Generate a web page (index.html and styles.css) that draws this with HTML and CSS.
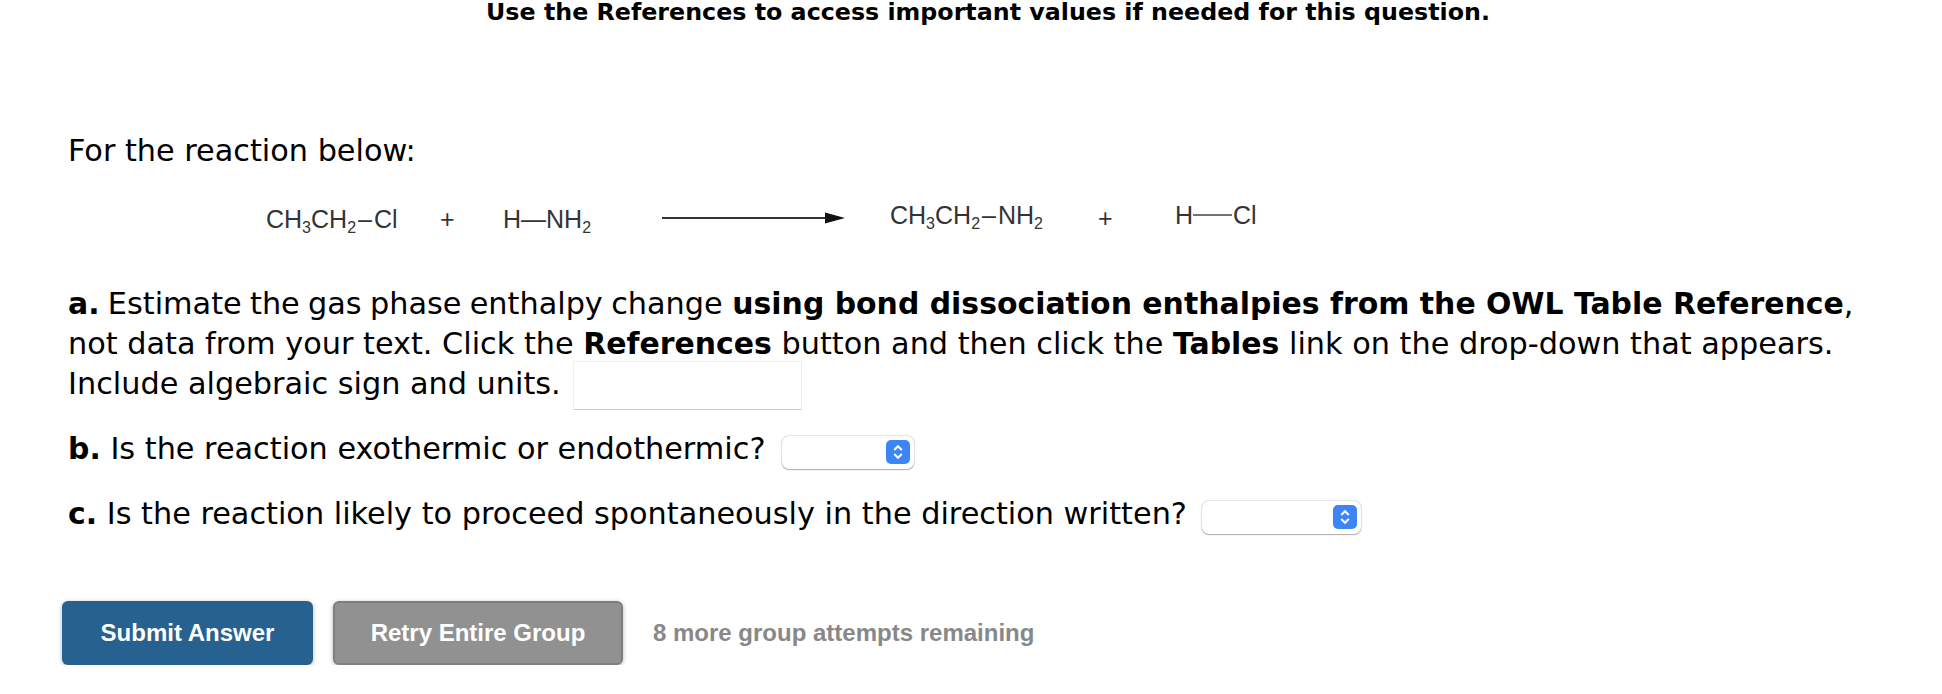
FILE: index.html
```html
<!DOCTYPE html>
<html lang="en">
<head>
    <meta charset="UTF-8">
    <title>Reaction question</title>
    <link rel="stylesheet" href="styles.css">
</head>
<body>
    <div class="notice">Use the References to access important values if needed for this question.</div>

    <div class="question">
        <p class="intro">For the reaction below:</p>

        <!-- reaction scheme -->
        <svg class="reaction" width="1200" height="60" viewBox="0 0 1200 60">
            <g class="chem">
                <text x="198" y="40">CH<tspan class="sub" dy="5">3</tspan><tspan dy="-5">CH</tspan><tspan class="sub" dy="5">2</tspan><tspan dx="2" dy="-5">&#8211;</tspan><tspan dx="2">Cl</tspan></text>
                <text x="372" y="40">+</text>
                <text x="435" y="40">H&#8212;NH<tspan class="sub" dy="5">2</tspan></text>
                <text x="822" y="36">CH<tspan class="sub" dy="5">3</tspan><tspan dy="-5">CH</tspan><tspan class="sub" dy="5">2</tspan><tspan dx="2" dy="-5">&#8211;</tspan><tspan dx="2">NH</tspan><tspan class="sub" dy="5">2</tspan></text>
                <text x="1030" y="39">+</text>
                <text x="1107" y="36">H</text>
                <text x="1165" y="36">Cl</text>
            </g>
            <line x1="1125" y1="27" x2="1164" y2="27" stroke="#444" stroke-width="1.3"/>
            <line x1="594" y1="30" x2="765" y2="30" stroke="#333" stroke-width="1.8"/>
            <path d="M757 24.5 L777 30 L757 35.5 Z" fill="#111"/>
        </svg>

        <p class="part-a"><span class="tight"><b>a.</b> Estimate the gas phase enthalpy change</span> <b>using bond dissociation enthalpies from the OWL Table Reference</b>,<br>
        not data from your text. Click the <b>References</b> button and then click the <b>Tables</b> link on the drop-down that appears.<br>
        Include algebraic sign and units. <span class="answer-box"></span></p>

        <p class="part-b"><b>b.</b> Is the reaction exothermic or endothermic? <span class="select-box short"><span class="select-arrow"><svg width="10" height="16" viewBox="0 0 10 16"><path d="M1.2 6 L5 2.2 L8.8 6 M1.2 10 L5 13.8 L8.8 10" fill="none" stroke="#fff" stroke-width="2"/></svg></span></span></p>

        <p class="part-c"><b>c.</b> Is the reaction likely to proceed spontaneously in the direction written? <span class="select-box long"><span class="select-arrow"><svg width="10" height="16" viewBox="0 0 10 16"><path d="M1.2 6 L5 2.2 L8.8 6 M1.2 10 L5 13.8 L8.8 10" fill="none" stroke="#fff" stroke-width="2"/></svg></span></span></p>
    </div>

    <div class="actions">
        <button class="btn btn-submit">Submit Answer</button>
        <button class="btn btn-retry">Retry Entire Group</button>
        <span class="attempts">8 more group attempts remaining</span>
    </div>
</body>
</html>
```

FILE: styles.css
```css
body {
    margin: 0;
    background-color: #fff;
    color: #000;
    font-family: "DejaVu Sans", sans-serif;
    font-size: 30.3px;
    line-height: 40px;
}
b {
    font-size: 29.9px;
}
.tight {
    word-spacing: -1.3px;
}
.notice {
    padding-left: 34px;
    height: 22px;
    line-height: 24px;
    text-align: center;
    font-size: 23.75px;
    font-weight: bold;
}
.question {
    padding-left: 68px;
}
.question p {
    margin: 0;
}
.intro {
    padding-top: 109px;
}
.reaction {
    display: block;
    margin: 17px 0 0 0;
}
.chem text {
    font-family: "Liberation Sans", Arial, sans-serif;
    font-size: 25px;
    fill: #333;
}
.chem .sub {
    font-size: 16px;
}
.part-a {
    padding-top: 36px;
}
.part-b {
    padding-top: 25px;
}
.part-c {
    padding-top: 25px;
}
.answer-box {
    display: inline-block;
    width: 229px;
    height: 49px;
    margin: -12px 0 -12px 3px;
    vertical-align: -4px;
    box-sizing: border-box;
    border: 1px solid #eee;
    border-bottom-color: #ccc;
}
.select-box {
    display: inline-flex;
    justify-content: flex-end;
    align-items: center;
    height: 33px;
    margin: -6px 0 -6px 7px;
    padding-right: 4px;
    vertical-align: -1px;
    box-sizing: border-box;
    border-radius: 7px;
    background-color: #fff;
    box-shadow: 0 0 2px rgba(0,0,0,0.35), 0 1px 1px rgba(0,0,0,0.25);
}
.short {
    width: 132px;
}
.long {
    width: 159px;
    margin-left: 5px;
}
.select-arrow {
    display: flex;
    justify-content: center;
    align-items: center;
    width: 24px;
    height: 24px;
    border-radius: 5px;
    background-color: #3b85f7;
}
.actions {
    display: flex;
    align-items: center;
    margin-top: 67px;
    padding-left: 62px;
}
.btn {
    height: 64px;
    border-radius: 6px;
    color: #fff;
    font-family: "Liberation Sans", Arial, sans-serif;
    font-size: 24px;
    font-weight: bold;
    box-shadow: 0 1px 4px rgba(0,0,0,0.3);
}
.btn-submit {
    width: 251px;
    margin-right: 20px;
    border: none;
    background-color: #27618f;
}
.btn-retry {
    width: 290px;
    margin-right: 30px;
    border: 2px solid #7f7f7f;
    background-color: #919191;
}
.attempts {
    color: #888;
    font-family: "Liberation Sans", Arial, sans-serif;
    font-size: 24px;
    font-weight: bold;
}
```
